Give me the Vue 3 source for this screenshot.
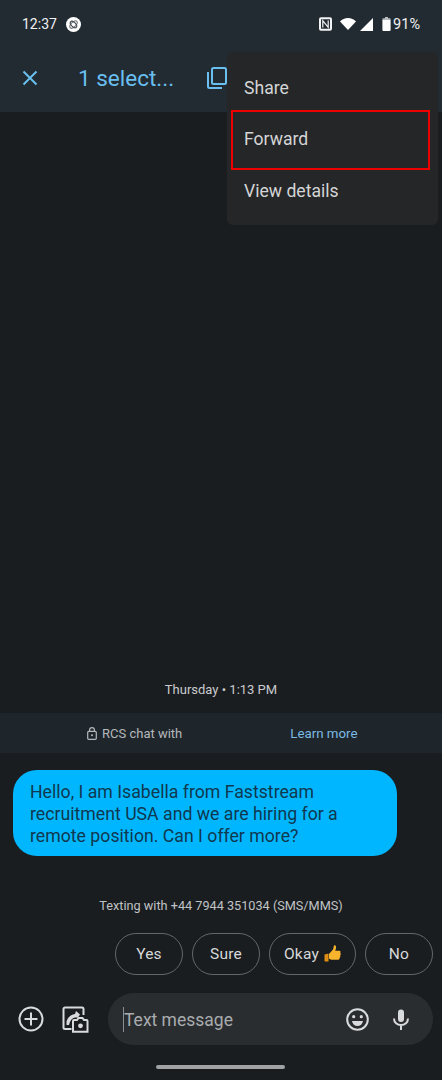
<template>
  <div class="screen">
    <header class="topbar">
      <div class="status">
        <div class="status-left">
          <span class="clock">12:37</span>
          <svg class="disc" width="15" height="15" viewBox="0 0 15 15">
            <circle cx="7.5" cy="7.5" r="7.5" fill="#fff" />
            <ellipse cx="7.5" cy="7.5" rx="4.6" ry="2.4" transform="rotate(-45 7.5 7.5)" fill="none" stroke="#777b7f" stroke-width="1.1" />
            <ellipse cx="7.5" cy="7.5" rx="2.2" ry="4" transform="rotate(-45 7.5 7.5)" fill="none" stroke="#43484d" stroke-width="1.1" />
          </svg>
        </div>
        <div class="status-right">
          <svg width="13" height="14" viewBox="0 0 13 14">
            <rect x="1" y="1.2" width="11" height="11.6" rx="1" fill="none" stroke="#f2f3f4" stroke-width="2" />
            <path d="M3.800 10.500V3.700L9.200 10.300V3.500" fill="none" stroke="#f2f3f4" stroke-width="1.200" />
          </svg>
          <svg class="wifi" width="16" height="12" viewBox="0 0 16 12">
            <path d="M0 3.400C2 1.300 4.800 0 8 0s6 1.300 8 3.400L8 12z" fill="#fff" />
          </svg>
          <svg class="signal" width="13" height="13" viewBox="0 0 13 13">
            <path d="M13 0v13H0z" fill="#fff" />
          </svg>
          <svg class="battery" width="9" height="14" viewBox="0 0 9 14">
            <path d="M3 0h3v1.200h1.600a1 1 0 0 1 1 1V3H.4v-.8a1 1 0 0 1 1-1H3z" fill="#b9bcbf" />
            <path d="M.4 3h8.200v10a1 1 0 0 1-1 1H1.400a1 1 0 0 1-1-1z" fill="#fff" />
          </svg>
          <span class="pct">91%</span>
        </div>
      </div>
      <div class="toolbar">
        <svg class="close" width="16" height="16" viewBox="0 0 16 16">
          <path d="M1.500 1.500l13 13M14.500 1.500l-13 13" stroke="#68bff0" stroke-width="2" />
        </svg>
        <span class="title">1 select...</span>
        <svg class="copy" width="20" height="22" viewBox="0 0 20 22">
          <rect x="5" y="1" width="14" height="16" rx="1.500" fill="none" stroke="#68bff0" stroke-width="2" />
          <path d="M1 5v14.500A1.500 1.500 0 0 0 2.500 21H15" fill="none" stroke="#68bff0" stroke-width="2" />
        </svg>
      </div>
    </header>

    <main class="thread">
      <div class="stamp">Thursday • 1:13 PM</div>
      <div class="banner">
        <div class="banner-left">
          <svg width="10" height="13" viewBox="0 0 10 13">
            <rect x="0.700" y="4.400" width="8.600" height="7.900" rx="1" fill="none" stroke="#b5b8bb" stroke-width="1.200" />
            <path d="M2.600 4.400V3a2.400 2.400 0 0 1 4.800 0v1.400" fill="none" stroke="#b5b8bb" stroke-width="1.200" />
            <circle cx="5" cy="8.300" r="1" fill="#b5b8bb" />
          </svg>
          <span>RCS chat with</span>
        </div>
        <span class="learn">Learn more</span>
      </div>
      <div class="bubble">Hello, I am Isabella from Faststream recruitment USA and we are hiring for a remote position. Can I offer more?</div>
      <div class="texting">Texting with +44 7944 351034 (SMS/MMS)</div>
      <div class="chips">
        <div class="chip yes">Yes</div>
        <div class="chip sure">Sure</div>
        <div class="chip okay">
          Okay
          <svg width="17" height="18" viewBox="0 0 17 18">
            <path d="M5 9 8.800 4.800c.6-.7.800-1.800.9-3.200C9.800.3 11 0 11.600.8c.8 1.100.6 2.900-.5 5h4.200c1.200 0 1.700 1.500.9 2.300.8.700.7 1.900-.1 2.400.5.800.3 1.900-.6 2.300.3 1-.3 2-1.400 2H8.600c-1.500 0-2.600-.5-3.600-1z" fill="#f7b42c" />
            <path d="M.5 9.500 4.500 8.500V16.500H1.300a.8.800 0 0 1-.8-.8z" fill="#e08e12" />
          </svg>
        </div>
        <div class="chip no">No</div>
      </div>
      <div class="composer">
        <svg class="add" width="26" height="26" viewBox="0 0 26 26">
          <circle cx="13" cy="13" r="11.500" fill="none" stroke="#d9dadb" stroke-width="2" />
          <path d="M13 6.500v13M6.500 13h13" stroke="#d9dadb" stroke-width="2" />
        </svg>
        <svg class="gallery" width="27" height="27" viewBox="0 0 27 27">
          <path d="M9.500 23H3a1.500 1.500 0 0 1-1.500-1.500V3A1.500 1.500 0 0 1 3 1.500h17A1.500 1.500 0 0 1 21.500 3v6" fill="none" stroke="#d9dadb" stroke-width="2" />
          <path d="M4.500 19v-3.500C6 11 9 8.500 13 8l1-3 4 3.500-2 3H13c-3 .5-5 3-6 7.500z" fill="#d9dadb" />
          <path d="M11 25.800V15a1 1 0 0 1 1-1h3l1.500-2h4l1.500 2h2.500a1 1 0 0 1 1 1v10.800z" fill="#1a1d20" stroke="#d9dadb" stroke-width="2" />
          <circle cx="18.500" cy="19.800" r="2.400" fill="#d9dadb" />
        </svg>
        <div class="field">
          <span class="caret"></span>
          <span class="placeholder">Text message</span>
          <svg class="smile" width="23" height="23" viewBox="0 0 23 23">
            <circle cx="11.500" cy="11.500" r="10.300" fill="none" stroke="#d9dadb" stroke-width="2" />
            <circle cx="7.700" cy="8.700" r="1.600" fill="#d9dadb" />
            <circle cx="15.300" cy="8.700" r="1.600" fill="#d9dadb" />
            <path d="M6 13h11c-.5 3-2.700 5-5.500 5S6.500 16 6 13z" fill="#d9dadb" />
          </svg>
          <svg class="mic" width="16" height="21" viewBox="0 0 16 21">
            <rect x="5" y="0.500" width="6" height="12.500" rx="3" fill="#d9dadb" />
            <path d="M1 9.500c0 3.900 3.100 6.500 7 6.500s7-2.600 7-6.500M8 16v5" fill="none" stroke="#d9dadb" stroke-width="2" />
          </svg>
        </div>
      </div>
      <div class="home-row"><div class="home"></div></div>
    </main>

    <div class="menu">
      <div class="menu-item">Share</div>
      <div class="menu-item">Forward</div>
      <div class="menu-item">View details</div>
    </div>
    <div class="highlight"></div>
  </div>
</template>

<script setup>
</script>

<style>
html,
body {
  background: #1a1d20;
}
</style>

<style scoped>
.screen {
  position: relative;
  width: 442px;
  height: 1080px;
  overflow: hidden;
  display: flex;
  flex-direction: column;
  background: #1a1d20;
  font-family: Roboto, "Liberation Sans", sans-serif;
}
.topbar {
  height: 112px;
  flex: none;
  background: #232b32;
}
.status {
  height: 48px;
  padding: 0 22px;
  display: flex;
  justify-content: space-between;
  align-items: center;
}
.status-left {
  display: flex;
  align-items: center;
  gap: 9px;
}
.clock {
  font-size: 14px;
  color: #f1f2f3;
}
.status-right {
  display: flex;
  align-items: center;
  gap: 6px;
}
.wifi {
  margin-left: 2px;
}
.signal {
  margin-left: -2px;
}
.battery {
  margin-left: 3px;
}
.pct {
  font-size: 14.500px;
  color: #f1f2f3;
  margin-left: -4px;
}
.toolbar {
  height: 60px;
  display: flex;
  align-items: center;
  padding-left: 22px;
}
.title {
  margin-left: 40px;
  font-size: 22.500px;
  color: #68bff0;
  width: 129px;
  white-space: nowrap;
}
.copy {
  flex: none;
}
.thread {
  flex: 1;
  display: flex;
  flex-direction: column;
  justify-content: flex-end;
}
.stamp {
  text-align: center;
  font-size: 13px;
  color: #c9cbcc;
  line-height: 16px;
  margin-bottom: 15px;
}
.banner {
  height: 40px;
  background: #1f262b;
  display: flex;
  align-items: center;
  font-size: 13px;
}
.banner-left {
  display: flex;
  align-items: center;
  gap: 5px;
  margin-left: 87px;
  color: #b5b8bb;
}
.learn {
  margin-left: 108px;
  color: #7cb9e4;
  font-size: 13.300px;
}
.bubble {
  margin: 17px 0 0 13px;
  width: 384px;
  height: 86px;
  box-sizing: border-box;
  padding: 11px 17px;
  border-radius: 24px;
  background: #00b7ff;
  color: #10384f;
  font-size: 17.700px;
  line-height: 22px;
}
.texting {
  margin-top: 42px;
  text-align: center;
  font-size: 12.700px;
  line-height: 16px;
  color: #c0c3c5;
}
.chips {
  margin-top: 19px;
  padding-right: 9px;
  display: flex;
  justify-content: flex-end;
  gap: 9px;
}
.chip {
  height: 42px;
  box-sizing: border-box;
  display: flex;
  align-items: center;
  justify-content: center;
  gap: 5px;
  border: 1px solid #63676a;
  border-radius: 21px;
  color: #d6d8d9;
  font-size: 15.500px;
  letter-spacing: 0.200px;
}
.yes,
.sure,
.no {
  width: 68px;
}
.okay {
  width: 87px;
}
.composer {
  margin-top: 18px;
  display: flex;
  align-items: center;
  padding: 0 9px 0 18px;
}
.gallery {
  margin-left: 18px;
}
.field {
  margin-left: 19px;
  flex: 1;
  height: 52px;
  padding: 0 24px 0 15px;
  border-radius: 26px;
  background: #2a2d30;
  display: flex;
  align-items: center;
}
.caret {
  width: 1px;
  height: 25px;
  background: #8a8d90;
  flex: none;
}
.placeholder {
  flex: 1;
  padding-top: 2px;
  font-size: 17.500px;
  color: #a9acae;
}
.mic {
  margin-left: 24px;
}
.home-row {
  height: 35px;
  display: flex;
  justify-content: flex-start;
  padding: 20px 0 0 156px;
  box-sizing: border-box;
}
.home {
  width: 129px;
  height: 4px;
  border-radius: 2px;
  background: #a0a2a4;
}
.menu {
  position: absolute;
  left: 227px;
  top: 52px;
  width: 211px;
  height: 173px;
  padding: 10px 0;
  box-sizing: border-box;
  border-radius: 6px;
  background: #252628;
}
.menu-item {
  height: 51.500px;
  padding-left: 17px;
  display: flex;
  align-items: center;
  font-size: 17.600px;
  color: #d4d5d6;
}
.highlight {
  position: absolute;
  left: 231px;
  top: 110px;
  width: 199px;
  height: 60px;
  box-sizing: border-box;
  border: 2px solid #ee0000;
}
</style>
